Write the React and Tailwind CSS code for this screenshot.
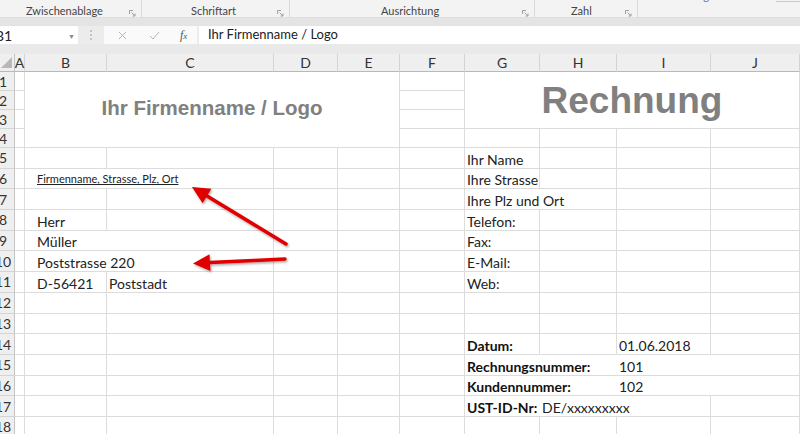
import React from "react";

const cols = ["A", "B", "C", "D", "E", "F", "G", "H", "I", "J"];
const rows = Array.from({ length: 18 }, (_, i) => i + 1);

// merged ranges: anchor -> covered cells
const merges = {
  B1: { cls: "col-span-4 row-span-4", cols: ["B", "C", "D", "E"], rows: [1, 2, 3, 4] },
  G1: { cls: "col-span-4 row-span-3", cols: ["G", "H", "I", "J"], rows: [1, 2, 3] },
};

const covered = new Set();
Object.entries(merges).forEach(([key, m]) => {
  m.cols.forEach((c) => m.rows.forEach((r) => {
    if (`${c}${r}` !== key) covered.add(`${c}${r}`);
  }));
});

const body = "text-[14px] text-[#222] pl-[2px]";
const bold = "text-[14px] text-[#111] font-bold pl-[2px]";

const cells = {
  B1: { text: "Ihr Firmenname / Logo", center: "font-['Liberation_Sans',sans-serif] font-bold text-[20.5px] text-[#808080] pb-[3px]" },
  G1: { text: "Rechnung", center: "font-['Liberation_Sans',sans-serif] font-bold text-[37px] text-[#808080]" },
  B6: { text: "Firmenname, Strasse, Plz, Ort", cls: "text-[11px] text-[#222] underline pl-[12px] pb-[1px]" },
  B8: { text: "Herr", cls: body + " pl-[12px]" },
  B9: { text: "Müller", cls: body + " pl-[12px]" },
  B10: { text: "Poststrasse 220", cls: body + " pl-[12px]" },
  B11: { text: "D-56421", cls: body + " pl-[12px]" },
  C11: { text: "Poststadt", cls: body },
  G5: { text: "Ihr Name", cls: body },
  G6: { text: "Ihre Strasse", cls: body },
  G7: { text: "Ihre Plz und Ort", cls: body },
  G8: { text: "Telefon:", cls: body },
  G9: { text: "Fax:", cls: body },
  G10: { text: "E-Mail:", cls: body },
  G11: { text: "Web:", cls: body },
  G14: { text: "Datum:", cls: bold },
  I14: { text: "01.06.2018", cls: body },
  G15: { text: "Rechnungsnummer:", cls: bold },
  I15: { text: "101", cls: body },
  G16: { text: "Kundennummer:", cls: bold },
  I16: { text: "102", cls: body },
  G17: { text: "UST-ID-Nr:", cls: bold },
  H17: { text: "DE/xxxxxxxxx", cls: body },
};

// gridlines hidden by overflowing text
const noRight = new Set(["B6", "B9", "B10", "G7", "G15", "G16", "H15", "H16", "I15", "I16", "G17", "H17"]);

const Launcher = () => (
  <svg width="7" height="7" viewBox="0 0 7 7" className="absolute right-[5px] top-[10px]">
    <path d="M0.5 4V0.5H4" fill="none" stroke="#a0a0a0" strokeWidth="1" />
    <path d="M2.5 2.5L6 6M6 3.5V6H3.5" fill="none" stroke="#a0a0a0" strokeWidth="1" />
  </svg>
);

const Group = ({ w, label }) => (
  <div className={`relative h-full border-r border-[#d8d8d8] shrink-0 ${w} pt-[5px]`}>
    {label}
    <Launcher />
  </div>
);

const Arrow = ({ tail, base, tip, c1, c2 }) => (
  <g filter="url(#shadow)">
    <line x1={tail[0]} y1={tail[1]} x2={base[0]} y2={base[1]} stroke="#e10000" strokeWidth="3.5" strokeLinecap="round" />
    <polygon points={`${tip[0]},${tip[1]} ${c1[0]},${c1[1]} ${c2[0]},${c2[1]}`} fill="#e10000" />
  </g>
);

export default function App() {
  return (
    <div className="relative w-[800px] h-[434px] overflow-hidden bg-white font-['Lato',sans-serif]">
      {/* Ribbon group labels */}
      <div className="h-[18px] flex bg-[#f3f3f3] text-[11px] leading-[12px] text-[#444] border-b border-[#dedede]">
        <Group w="w-[142px]" label={<span className="ml-[26px]">Zwischenablage</span>} />
        <Group w="w-[148px]" label={<span className="ml-[49px]">Schriftart</span>} />
        <Group w="w-[245px]" label={<span className="ml-[91px]">Ausrichtung</span>} />
        <Group w="w-[103px]" label={<span className="ml-[36px]">Zahl</span>} />
        <div className="flex-1 relative overflow-hidden">
          <span className="absolute left-[6px] top-[-10px] text-[#777] whitespace-nowrap">
            Formatierung&nbsp;&nbsp;&nbsp;&nbsp;&nbsp;Formatieren
          </span>
          <div className="absolute right-0 top-0 w-[24px] h-[2px] border-b border-[#c8c8c8]" />
        </div>
      </div>
      <div className="h-[8px] bg-[#e4e4e4]" />

      {/* Formula bar */}
      <div className="h-[18px] flex bg-[#ececec]">
        <div className="w-[78px] h-full bg-white flex items-center overflow-hidden relative">
          <span className="text-[14px] text-[#222] -ml-[5px]">B1</span>
          <span className="absolute left-[68px] top-[5px] text-[7px] text-[#888]">▼</span>
        </div>
        <div className="w-[26px] flex flex-col items-center justify-center gap-[2px]">
          <div className="w-[2px] h-[2px] bg-[#c4c4c4]" />
          <div className="w-[2px] h-[2px] bg-[#c4c4c4]" />
          <div className="w-[2px] h-[2px] bg-[#c4c4c4]" />
        </div>
        <div className="w-[93px] h-full bg-[#fafafa] flex items-center">
          <svg width="9" height="9" viewBox="0 0 9 9" className="ml-[14px]">
            <path d="M1 1L8 8M8 1L1 8" stroke="#b4b4b4" strokeWidth="1" />
          </svg>
          <svg width="11" height="9" viewBox="0 0 11 9" className="ml-[22px]">
            <path d="M1 5L4 8L10 1" fill="none" stroke="#b4b4b4" strokeWidth="1" />
          </svg>
          <span className="ml-[20px] font-['Liberation_Serif',serif] italic text-[12px] text-[#555]">
            f<span className="text-[9px]">x</span>
          </span>
        </div>
        <div className="w-[2px]" />
        <div className="flex-1 h-full bg-white flex items-center pl-[9px] text-[13px] text-[#222]">
          Ihr Firmenname / Logo
        </div>
      </div>
      <div className="h-[10px] bg-[#e9e9e9]" />

      {/* Sheet grid */}
      <div className="grid grid-cols-[15px_10px_82px_167px_64px_62px_65px_75px_77px_94px_89px] grid-rows-[18px_repeat(4,19px)_repeat(14,20.7px)]">
        <div className="bg-[#efefef] border-r border-b border-r-[#c4c4c4] border-b-[#b9b9b9] relative">
          <svg width="11" height="11" viewBox="0 0 11 11" className="absolute right-[2px] bottom-[3px]">
            <polygon points="11,0 11,11 0,11" fill="#b8b8b8" />
          </svg>
        </div>
        {cols.map((c) => (
          <div
            key={c}
            className="bg-[#efefef] border-r border-b border-r-[#d4d4d4] border-b-[#b9b9b9] flex items-center justify-center text-[14px] text-[#333]"
          >
            {c}
          </div>
        ))}

        {rows.map((r) => (
          <React.Fragment key={r}>
            <div className="bg-[#efefef] border-r border-b border-r-[#c4c4c4] border-b-[#d4d4d4] overflow-hidden flex items-center">
              <span className="w-[30px] shrink-0 -ml-[12px] text-center text-[14px] text-[#333]">{r}</span>
            </div>
            {cols.map((c) => {
              const key = `${c}${r}`;
              if (covered.has(key)) return null;
              const cell = cells[key];
              const m = merges[key];
              const borders = noRight.has(key)
                ? "border-b border-[#dcdcdc]"
                : "border-r border-b border-[#dcdcdc]";
              if (cell && cell.center) {
                return (
                  <div key={key} className={`${m.cls} ${borders} flex items-center justify-center leading-none whitespace-nowrap ${cell.center}`}>
                    {cell.text}
                  </div>
                );
              }
              return (
                <div key={key} className={`${borders} flex items-end whitespace-nowrap leading-[17px] overflow-visible`}>
                  {cell && <span className={cell.cls}>{cell.text}</span>}
                </div>
              );
            })}
          </React.Fragment>
        ))}
      </div>

      {/* Annotation arrows */}
      <svg width="800" height="434" viewBox="0 0 800 434" className="absolute inset-0 pointer-events-none">
        <defs>
          <filter id="shadow" x="-20%" y="-20%" width="140%" height="140%">
            <feDropShadow dx="1" dy="1.5" stdDeviation="1" floodColor="#000" floodOpacity="0.35" />
          </filter>
        </defs>
        <Arrow tail={[286, 244]} base={[207, 196]} tip={[192, 187]} c1={[211.4, 188.7]} c2={[202.6, 203.3]} />
        <Arrow tail={[285, 259]} base={[210, 262.6]} tip={[193, 263.5]} c1={[210.5, 271]} c2={[209.5, 254.3]} />
      </svg>
    </div>
  );
}
